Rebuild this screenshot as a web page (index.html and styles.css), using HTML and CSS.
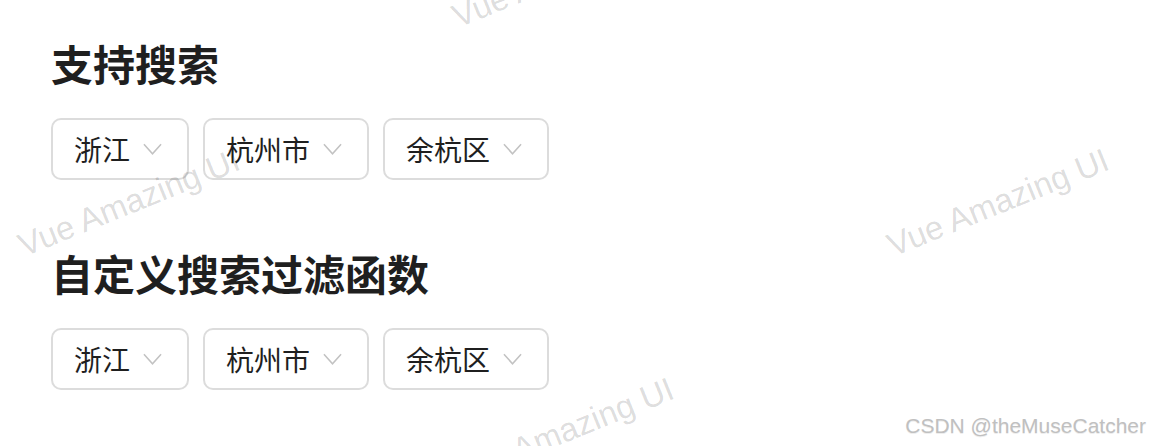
FILE: index.html
```html
<!DOCTYPE html>
<html>
<head>
    <title>Cascader</title>
    <link rel="stylesheet" href="styles.css">
</head>
<body>
    <div class="demo">
        <h2 class="demo-title">支持搜索</h2>
        <div class="cascader">
            <div class="select">
                <span class="select-label">浙江</span>
                <svg class="select-arrow" viewBox="0 0 20 12"><polyline points="1,1 10,11 19,1"/></svg>
            </div>
            <div class="select">
                <span class="select-label">杭州市</span>
                <svg class="select-arrow" viewBox="0 0 20 12"><polyline points="1,1 10,11 19,1"/></svg>
            </div>
            <div class="select">
                <span class="select-label">余杭区</span>
                <svg class="select-arrow" viewBox="0 0 20 12"><polyline points="1,1 10,11 19,1"/></svg>
            </div>
        </div>

        <h2 class="demo-title">自定义搜索过滤函数</h2>
        <div class="cascader">
            <div class="select">
                <span class="select-label">浙江</span>
                <svg class="select-arrow" viewBox="0 0 20 12"><polyline points="1,1 10,11 19,1"/></svg>
            </div>
            <div class="select">
                <span class="select-label">杭州市</span>
                <svg class="select-arrow" viewBox="0 0 20 12"><polyline points="1,1 10,11 19,1"/></svg>
            </div>
            <div class="select">
                <span class="select-label">余杭区</span>
                <svg class="select-arrow" viewBox="0 0 20 12"><polyline points="1,1 10,11 19,1"/></svg>
            </div>
        </div>
    </div>

    <!-- watermark layer, staggered grid -->
    <div class="watermark">
        <span class="watermark-text" style="left: 458px; top: 0px;">Vue Amazing UI</span>
        <span class="watermark-text" style="left: 24px; top: 229px;">Vue Amazing UI</span>
        <span class="watermark-text" style="left: 893px; top: 229px;">Vue Amazing UI</span>
        <span class="watermark-text" style="left: 458px; top: 458px;">Vue Amazing UI</span>
    </div>

    <div class="credit">CSDN @theMuseCatcher</div>
</body>
</html>
```

FILE: styles.css
```css
body {
    font-family: "Liberation Sans", "Noto Sans CJK SC", sans-serif;
    margin: 0;
    padding: 0;
    background: #fff;
    color: #1f1f1f;
    height: 100vh;
    overflow: hidden;
    position: relative;
}

.demo {
    padding: 32px 0 0 51px;
}

.demo-title {
    font-family: "Noto Sans CJK SC", sans-serif;
    font-size: 42px;
    font-weight: 700;
    line-height: 62px;
    margin: 0 0 24px;
    color: #1f1f1f;
}

.cascader {
    display: flex;
    gap: 14px;
    margin-bottom: 62px;
}

.select {
    display: flex;
    align-items: center;
    gap: 13px;
    height: 62px;
    box-sizing: border-box;
    padding: 0 25px 0 21px;
    border: 2px solid #dcdcdc;
    border-radius: 10px;
    background: #fff;
}

.select-label {
    font-family: "Noto Sans CJK SC", sans-serif;
    font-size: 28px;
    line-height: 1;
    color: #1f1f1f;
}

.select-arrow {
    width: 19px;
    height: 12px;
    fill: none;
    stroke: #c2c2c2;
    stroke-width: 1.6;
}

.watermark {
    position: absolute;
    inset: 0;
    pointer-events: none;
    overflow: hidden;
}

.watermark-text {
    position: absolute;
    font-family: "Liberation Sans", sans-serif;
    font-size: 33px;
    line-height: 1;
    white-space: nowrap;
    color: rgba(0, 0, 0, 0.15);
    transform-origin: 0 28px;
    transform: rotate(-22deg);
}

.credit {
    position: absolute;
    right: 4px;
    bottom: 10px;
    font-family: "Liberation Sans", sans-serif;
    font-size: 21px;
    line-height: 1;
    color: #c0c0c0;
    text-shadow: 0 1px 0 #eee;
}
```
